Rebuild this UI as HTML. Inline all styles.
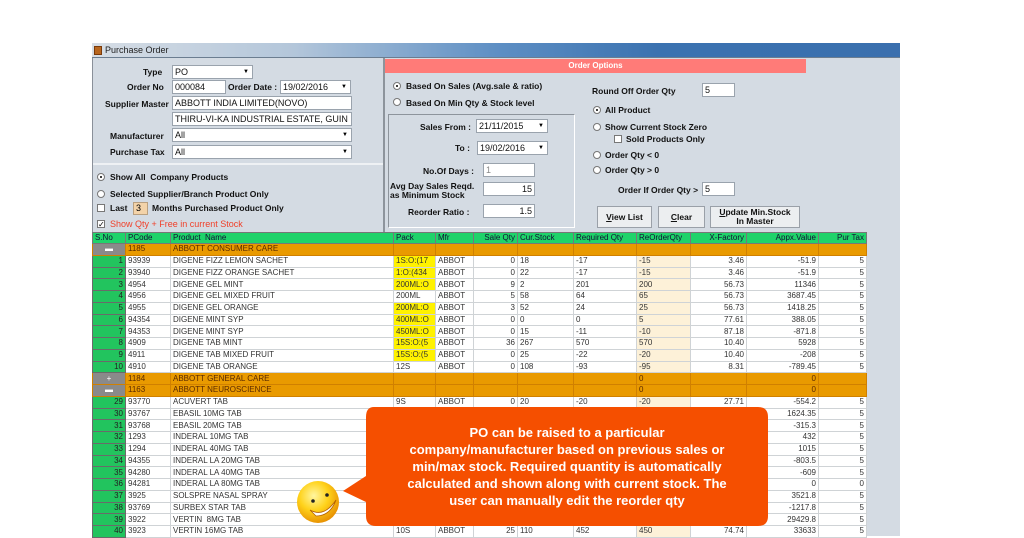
<!DOCTYPE html>
<html><head><meta charset="utf-8">
<style>
*{margin:0;padding:0;box-sizing:border-box}
body{width:1024px;height:536px;background:#fff;position:relative;overflow:hidden;font-family:"Liberation Sans",Arial,sans-serif}
.a{position:absolute}
.win{left:92px;top:43px;width:808px;height:493px;background:#d4dbe3;border-left:1px solid #8a9099}
.title{left:92px;top:43px;width:808px;height:15px;background:linear-gradient(90deg,#d6dde5 0%,#b3c6da 25%,#5e8fc4 50%,#3b72b0 70%,#3a6fae 100%);font-size:9px;color:#222;padding:2px 0 0 13px;border-bottom:1px solid #6b7d90}
.lb{position:absolute;font-size:8.5px;font-weight:bold;color:#111;white-space:nowrap}
.in{position:absolute;background:#fff;border:1px solid #9aa3ad;font-size:9px;color:#111;padding:1px 2px;height:14px;white-space:nowrap;overflow:hidden}
.dd{position:absolute;right:1px;top:1px;width:10px;height:10px;font-size:6px;text-align:center;line-height:10px;color:#000}
.rad{position:absolute;width:8px;height:8px;border:1px solid #777;border-radius:50%;background:#fff}
.rad.on:after{content:"";position:absolute;left:2px;top:2px;width:2px;height:2px;background:#000;border-radius:50%}
.chk{position:absolute;width:8px;height:8px;border:1px solid #777;background:#fff;font-size:8px;line-height:7px;text-align:center}
.btn{position:absolute;background:#eceef0;border:1px solid #9aa0a8;font-size:8.5px;font-weight:bold;text-align:center;color:#111;line-height:9px}
table{position:absolute;left:92px;top:232px;border-collapse:collapse;font-size:8px;color:#333;table-layout:fixed}
td{height:11.75px;border:1px solid #cfd3d6;padding:0 2px;white-space:nowrap;overflow:hidden;line-height:10px;background:#fff}
th{height:11px;background:#1fd36a;border:1px solid #777;font-weight:normal;text-align:left;padding:0 2px;color:#113;white-space:nowrap;overflow:hidden;line-height:10px}
td.n{background:#22c45e;text-align:right;color:#222;border-color:#6a6a6a}
tr.g td{background:#e99a00;color:#5a2a00;border-color:#d08000}
tr.g td.n{background:#8a8a8a}
td.y{background:#fff200}
td.o{background:#fdf1d8}
td.r{text-align:right}
</style></head><body>
<div class="a win"></div>
<div class="a title"><span style="position:absolute;left:2px;top:3px;width:8px;height:9px;background:#b8661e;border:1px solid #7a3a0a"></span>Purchase Order</div>

<div class="lb" style="left:143px;top:67px">Type</div>
<div class="in" style="left:172px;top:65px;width:81px">PO<span class="dd">▼</span></div>
<div class="lb" style="left:127px;top:82px">Order No</div>
<div class="in" style="left:172px;top:80px;width:54px">000084</div>
<div class="lb" style="left:228px;top:82px">Order Date :</div>
<div class="in" style="left:280px;top:80px;width:71px">19/02/2016<span class="dd">▼</span></div>
<div class="lb" style="left:105px;top:99px">Supplier Master</div>
<div class="in" style="left:172px;top:96px;width:180px">ABBOTT INDIA LIMITED(NOVO)</div>
<div class="in" style="left:172px;top:112px;width:180px">THIRU-VI-KA INDUSTRIAL ESTATE, GUIN</div>
<div class="lb" style="left:110px;top:131px">Manufacturer</div>
<div class="in" style="left:172px;top:128px;width:180px">All<span class="dd">▼</span></div>
<div class="lb" style="left:110px;top:147px">Purchase Tax</div>
<div class="in" style="left:172px;top:145px;width:180px">All<span class="dd">▼</span></div>
<div class="a" style="left:93px;top:163px;width:290px;height:2px;background:#eef1f4"></div>
<div class="rad on" style="left:97px;top:173px"></div><div class="lb" style="left:110px;top:172px">Show All&nbsp; Company Products</div>
<div class="rad" style="left:97px;top:190px"></div><div class="lb" style="left:110px;top:189px">Selected Supplier/Branch Product Only</div>
<div class="chk" style="left:97px;top:204px"></div><div class="lb" style="left:110px;top:203px">Last</div>
<div class="a" style="left:133px;top:202px;width:15px;height:13px;background:#f3d3a9;border:1px solid #b9a080;font-size:9px;padding-left:2px">3</div>
<div class="lb" style="left:152px;top:203px">Months Purchased Product Only</div>
<div class="chk" style="left:97px;top:220px">✓</div><div class="lb" style="left:110px;top:219px;color:#f0402a;font-weight:normal;font-size:9px">Show Qty + Free in current Stock</div>

<div class="a" style="left:383px;top:58px;width:2px;height:174px;background:#8d949c"></div>
<div class="a" style="left:385px;top:59px;width:421px;height:14px;background:#ff7b78;color:#fff;font-size:8px;font-weight:bold;text-align:center;line-height:13px">Order Options</div>
<div class="rad on" style="left:393px;top:82px"></div><div class="lb" style="left:406px;top:81px">Based On Sales (Avg.sale &amp; ratio)</div>
<div class="rad" style="left:393px;top:98px"></div><div class="lb" style="left:406px;top:98px">Based On Min Qty &amp; Stock level</div>
<div class="a" style="left:388px;top:114px;width:187px;height:114px;border:1px solid #8d949c;border-right-color:#fff;border-bottom-color:#fff"></div>
<div class="lb" style="left:420px;top:122px">Sales From :</div>
<div class="in" style="left:476px;top:119px;width:72px">21/11/2015<span class="dd">▼</span></div>
<div class="lb" style="left:455px;top:143px">To :</div>
<div class="in" style="left:477px;top:141px;width:71px">19/02/2016<span class="dd">▼</span></div>
<div class="lb" style="left:423px;top:166px">No.Of Days :</div>
<div class="in" style="left:483px;top:163px;width:52px;color:#888">1</div>
<div class="lb" style="left:390px;top:182px;line-height:9px">Avg Day Sales Reqd.<br>as Minimum Stock</div>
<div class="in" style="left:483px;top:182px;width:52px;text-align:right">15</div>
<div class="lb" style="left:408px;top:207px">Reorder Ratio :</div>
<div class="in" style="left:483px;top:204px;width:52px;text-align:right">1.5</div>

<div class="lb" style="left:592px;top:86px">Round Off Order Qty</div>
<div class="in" style="left:702px;top:83px;width:33px">5</div>
<div class="rad on" style="left:593px;top:106px"></div><div class="lb" style="left:605px;top:105px">All Product</div>
<div class="rad" style="left:593px;top:123px"></div><div class="lb" style="left:605px;top:122px">Show Current Stock Zero</div>
<div class="chk" style="left:614px;top:135px"></div><div class="lb" style="left:626px;top:134px">Sold Products Only</div>
<div class="rad" style="left:593px;top:151px"></div><div class="lb" style="left:605px;top:150px">Order Qty &lt; 0</div>
<div class="rad" style="left:593px;top:166px"></div><div class="lb" style="left:605px;top:165px">Order Qty &gt; 0</div>
<div class="lb" style="left:618px;top:185px">Order If Order Qty &gt;</div>
<div class="in" style="left:702px;top:182px;width:33px">5</div>
<div class="btn" style="left:597px;top:206px;width:55px;height:22px;line-height:20px"><u>V</u>iew List</div>
<div class="btn" style="left:658px;top:206px;width:47px;height:22px;line-height:20px"><u>C</u>lear</div>
<div class="btn" style="left:710px;top:206px;width:90px;height:22px;padding-top:1px"><u>U</u>pdate Min.Stock<br>In Master</div>

<div class="a" style="left:866px;top:232px;width:34px;height:304px;background:#d4dbe3;border-left:1px solid #888"></div>

<table>
<colgroup><col style="width:33px"><col style="width:45px"><col style="width:223px"><col style="width:42px"><col style="width:38px"><col style="width:44px"><col style="width:56px"><col style="width:63px"><col style="width:54px"><col style="width:56px"><col style="width:72px"><col style="width:48px"></colgroup>
<tr><th>S.No</th><th>PCode</th><th>Product&nbsp; Name</th><th>Pack</th><th>Mfr</th><th style="text-align:right">Sale Qty</th><th>Cur.Stock</th><th>Required Qty</th><th>ReOrderQty</th><th style="text-align:right">X-Factory</th><th style="text-align:right">Appx.Value</th><th style="text-align:right">Pur Tax</th></tr>
<tr class="g"><td class="n" style="text-align:center;color:#fff">▬</td><td>1185</td><td>ABBOTT CONSUMER CARE</td><td></td><td></td><td></td><td></td><td></td><td></td><td></td><td></td><td></td></tr>
<tr><td class="n">1</td><td>93939</td><td>DIGENE FIZZ LEMON SACHET</td><td class="y">1S:O:(17</td><td>ABBOT</td><td class="r">0</td><td>18</td><td>-17</td><td class="o">-15</td><td class="r">3.46</td><td class="r">-51.9</td><td class="r">5</td></tr>
<tr><td class="n">2</td><td>93940</td><td>DIGENE FIZZ ORANGE SACHET</td><td class="y">1:O:(434</td><td>ABBOT</td><td class="r">0</td><td>22</td><td>-17</td><td class="o">-15</td><td class="r">3.46</td><td class="r">-51.9</td><td class="r">5</td></tr>
<tr><td class="n">3</td><td>4954</td><td>DIGENE GEL MINT</td><td class="y">200ML:O</td><td>ABBOT</td><td class="r">9</td><td>2</td><td>201</td><td class="o">200</td><td class="r">56.73</td><td class="r">11346</td><td class="r">5</td></tr>
<tr><td class="n">4</td><td>4956</td><td>DIGENE GEL MIXED FRUIT</td><td>200ML</td><td>ABBOT</td><td class="r">5</td><td>58</td><td>64</td><td class="o">65</td><td class="r">56.73</td><td class="r">3687.45</td><td class="r">5</td></tr>
<tr><td class="n">5</td><td>4955</td><td>DIGENE GEL ORANGE</td><td class="y">200ML:O</td><td>ABBOT</td><td class="r">3</td><td>52</td><td>24</td><td class="o">25</td><td class="r">56.73</td><td class="r">1418.25</td><td class="r">5</td></tr>
<tr><td class="n">6</td><td>94354</td><td>DIGENE MINT SYP</td><td class="y">400ML:O</td><td>ABBOT</td><td class="r">0</td><td>0</td><td>0</td><td class="o">5</td><td class="r">77.61</td><td class="r">388.05</td><td class="r">5</td></tr>
<tr><td class="n">7</td><td>94353</td><td>DIGENE MINT SYP</td><td class="y">450ML:O</td><td>ABBOT</td><td class="r">0</td><td>15</td><td>-11</td><td class="o">-10</td><td class="r">87.18</td><td class="r">-871.8</td><td class="r">5</td></tr>
<tr><td class="n">8</td><td>4909</td><td>DIGENE TAB MINT</td><td class="y">15S:O:(5</td><td>ABBOT</td><td class="r">36</td><td>267</td><td>570</td><td class="o">570</td><td class="r">10.40</td><td class="r">5928</td><td class="r">5</td></tr>
<tr><td class="n">9</td><td>4911</td><td>DIGENE TAB MIXED FRUIT</td><td class="y">15S:O:(5</td><td>ABBOT</td><td class="r">0</td><td>25</td><td>-22</td><td class="o">-20</td><td class="r">10.40</td><td class="r">-208</td><td class="r">5</td></tr>
<tr><td class="n">10</td><td>4910</td><td>DIGENE TAB ORANGE</td><td>12S</td><td>ABBOT</td><td class="r">0</td><td>108</td><td>-93</td><td class="o">-95</td><td class="r">8.31</td><td class="r">-789.45</td><td class="r">5</td></tr>
<tr class="g"><td class="n" style="text-align:center;color:#fff">+</td><td>1184</td><td>ABBOTT GENERAL CARE</td><td></td><td></td><td></td><td></td><td></td><td>0</td><td></td><td class="r">0</td><td></td></tr>
<tr class="g"><td class="n" style="text-align:center;color:#fff">▬</td><td>1163</td><td>ABBOTT NEUROSCIENCE</td><td></td><td></td><td></td><td></td><td></td><td>0</td><td></td><td class="r">0</td><td></td></tr>
<tr><td class="n">29</td><td>93770</td><td>ACUVERT TAB</td><td>9S</td><td>ABBOT</td><td class="r">0</td><td>20</td><td>-20</td><td class="o">-20</td><td class="r">27.71</td><td class="r">-554.2</td><td class="r">5</td></tr>
<tr><td class="n">30</td><td>93767</td><td>EBASIL 10MG TAB</td><td></td><td></td><td></td><td></td><td></td><td class="o"></td><td></td><td class="r">1624.35</td><td class="r">5</td></tr>
<tr><td class="n">31</td><td>93768</td><td>EBASIL 20MG TAB</td><td></td><td></td><td></td><td></td><td></td><td class="o"></td><td></td><td class="r">-315.3</td><td class="r">5</td></tr>
<tr><td class="n">32</td><td>1293</td><td>INDERAL 10MG TAB</td><td></td><td></td><td></td><td></td><td></td><td class="o"></td><td></td><td class="r">432</td><td class="r">5</td></tr>
<tr><td class="n">33</td><td>1294</td><td>INDERAL 40MG TAB</td><td></td><td></td><td></td><td></td><td></td><td class="o"></td><td></td><td class="r">1015</td><td class="r">5</td></tr>
<tr><td class="n">34</td><td>94355</td><td>INDERAL LA 20MG TAB</td><td></td><td></td><td></td><td></td><td></td><td class="o"></td><td></td><td class="r">-803.5</td><td class="r">5</td></tr>
<tr><td class="n">35</td><td>94280</td><td>INDERAL LA 40MG TAB</td><td></td><td></td><td></td><td></td><td></td><td class="o"></td><td></td><td class="r">-609</td><td class="r">5</td></tr>
<tr><td class="n">36</td><td>94281</td><td>INDERAL LA 80MG TAB</td><td></td><td></td><td></td><td></td><td></td><td class="o"></td><td></td><td class="r">0</td><td class="r">0</td></tr>
<tr><td class="n">37</td><td>3925</td><td>SOLSPRE NASAL SPRAY</td><td></td><td></td><td></td><td></td><td></td><td class="o"></td><td></td><td class="r">3521.8</td><td class="r">5</td></tr>
<tr><td class="n">38</td><td>93769</td><td>SURBEX STAR TAB</td><td></td><td></td><td></td><td></td><td></td><td class="o"></td><td></td><td class="r">-1217.8</td><td class="r">5</td></tr>
<tr><td class="n">39</td><td>3922</td><td>VERTIN&nbsp; 8MG TAB</td><td></td><td></td><td></td><td></td><td></td><td class="o"></td><td></td><td class="r">29429.8</td><td class="r">5</td></tr>
<tr><td class="n">40</td><td>3923</td><td>VERTIN 16MG TAB</td><td>10S</td><td>ABBOT</td><td class="r">25</td><td>110</td><td>452</td><td class="o">450</td><td class="r">74.74</td><td class="r">33633</td><td class="r">5</td></tr>
</table>

<svg class="a" style="left:280px;top:400px" width="500" height="136">
<defs><radialGradient id="sm" cx="0.4" cy="0.35" r="0.7"><stop offset="0" stop-color="#fff6a0"/><stop offset="0.5" stop-color="#ffd21a"/><stop offset="1" stop-color="#e58a00"/></radialGradient></defs>
<path d="M94 7 H478 Q488 7 488 17 V116 Q488 126 478 126 H96 Q86 126 86 116 V102 L63 91 L86 76 V17 Q86 7 94 7 Z" fill="#f54f00"/>
<circle cx="38" cy="102" r="21" fill="url(#sm)"/>
<circle cx="33" cy="101" r="1.8" fill="#222"/><circle cx="47" cy="95" r="1.8" fill="#222"/>
<path d="M30 110 Q44 118 56 100 Q50 116 36 116 Z" fill="#fff" stroke="#b46000" stroke-width="0.8"/>
</svg>
<div class="a" style="left:366px;top:424px;width:402px;text-align:center;color:#fff;font-weight:bold;font-size:13px;line-height:17px">PO can be raised to a particular<br>company/manufacturer based on previous sales or<br>min/max stock. Required quantity is automatically<br>calculated and shown along with current stock. The<br>user can manually edit the reorder qty</div>
</body></html>
